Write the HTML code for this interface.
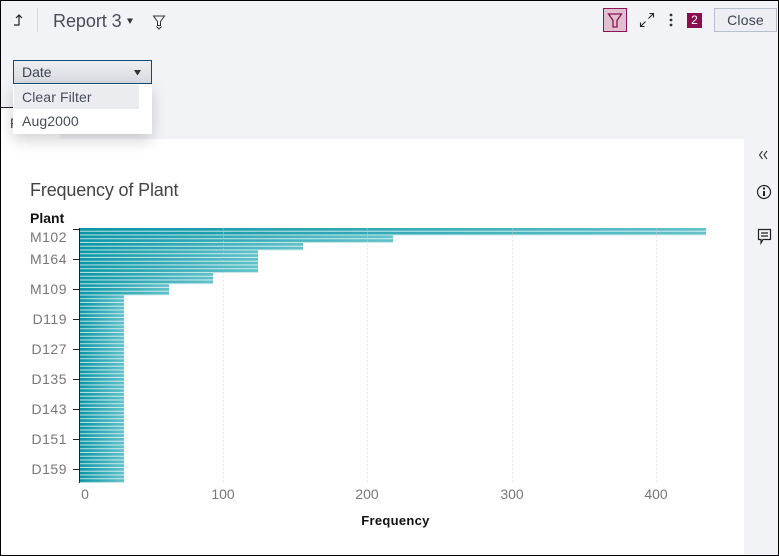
<!DOCTYPE html>
<html><head><meta charset="utf-8">
<style>
html,body{margin:0;padding:0}
body{width:779px;height:556px;overflow:hidden;position:relative;background:#f2f3f6;font-family:"Liberation Sans",sans-serif;color:#3d4450}
.a{position:absolute;white-space:nowrap}
</style></head><body>
<div class="a" style="left:0;top:107px;width:14px;height:1px;background:#222"></div>
<div class="a" style="left:0;top:108px;width:60px;height:31px;background:#fff"></div>
<div class="a" style="left:0;top:139px;width:744px;height:417px;background:#fff"></div>
<div class="a" style="left:10px;top:115px;font-size:14px;color:#444">P</div>

<div class="a" style="left:37px;top:8px;width:1px;height:24px;background:#d4d6db"></div>
<div class="a" style="left:53px;top:11px;font-size:18px;letter-spacing:-.05px;color:#474d59">Report 3</div>
<svg class="a" style="left:0;top:0" width="779" height="60">
<path d="M14 25H19V15M16 18L19 15L22 18" fill="none" stroke="#222" stroke-width="1.2"/>
<path d="M127 18.500H133L130 24Z" fill="#333"/>
<path d="M153.500 16H164.500L160.500 21.500V25.500H157.500V21.500Z M156.500 26.500L159 29L161.500 26.500" fill="none" stroke="#333" stroke-width="1"/>
<rect x="603.500" y="8.500" width="23" height="23" fill="#e0bfd0" stroke="#8a1550"/>
<path d="M608.500 14H621.500L617 20.500V27H613V20.500Z" fill="none" stroke="#8a1550" stroke-width="1.300"/>
<path d="M640.500 26.500L645.500 21.500M640.500 22.500V26.500H644.500M648.500 18.500L653.500 13.500M649.500 13.500H653.500V17.500" fill="none" stroke="#222" stroke-width="1.100"/>
<circle cx="671" cy="15" r="1.400" fill="#333"/><circle cx="671" cy="20" r="1.400" fill="#333"/><circle cx="671" cy="25" r="1.400" fill="#333"/>
<rect x="687" y="13" width="15" height="15" fill="#8a0f4e"/>
</svg>
<div class="a" style="left:687px;top:13px;width:15px;text-align:center;font-size:12px;line-height:15px;color:#fff">2</div>
<div class="a" style="left:714px;top:8px;width:61px;height:22px;border:1px solid #b4c0cf;background:#eceef2;font-size:14px;line-height:22px;text-align:center;color:#3d4450;letter-spacing:.2px">Close</div>

<div class="a" style="left:13px;top:60px;width:137px;height:22px;border:1px solid #0f4c7c;background:linear-gradient(#eceef1,#d8dbe0);font-size:14px;line-height:22px;text-indent:8px;color:#3d4450">Date</div>
<svg class="a" style="left:133px;top:69px" width="10" height="8"><path d="M1 1H8L4.500 6.500Z" fill="#333"/></svg>
<div class="a" style="left:13px;top:84px;width:139px;height:50px;background:#fff;box-shadow:0 6px 14px rgba(0,0,0,.18)"></div>
<div class="a" style="left:14px;top:85px;width:125px;height:24px;background:#eaecf0"></div>
<div class="a" style="left:22px;top:89px;font-size:14px;letter-spacing:.1px;color:#474d59">Clear Filter</div>
<div class="a" style="left:22px;top:113px;font-size:14px;letter-spacing:.1px;color:#474d59">Aug2000</div>

<svg class="a" style="left:750px;top:145px" width="29" height="100">
<path d="M12.500 6L9.500 10L12.500 14M17 6L14 10L17 14" fill="none" stroke="#333" stroke-width="1.100"/>
<circle cx="14" cy="47" r="6.500" fill="none" stroke="#222" stroke-width="1.200"/>
<path d="M14 46V51M14 42.500V44.500" stroke="#222" stroke-width="2"/>
<path d="M8.500 84.500H20.500V94.500H13L11 98V94.500H8.500Z M11 88H18M11 91H18" fill="none" stroke="#222" stroke-width="1.200"/>
</svg>

<div class="a" style="left:30px;top:180px;font-size:18px;letter-spacing:-.15px;color:#444">Frequency of Plant</div>
<div class="a" style="left:30px;top:210px;font-size:14px;font-weight:bold;color:#111">Plant</div>

<svg class="a" style="left:0;top:0" width="779" height="556" font-family="Liberation Sans, sans-serif" font-size="14" fill="#777">
<defs><linearGradient id="g"><stop offset="0" stop-color="#0a96a5"/><stop offset="1" stop-color="#62c1c9"/></linearGradient>
<pattern id="p" x="80" y="228" width="10" height="3.750" patternUnits="userSpaceOnUse"><rect y="2.700" width="10" height="1.050" fill="#fff" fill-opacity=".7"/></pattern></defs>
<rect x="80" y="228" width="626" height="7.500" fill="url(#g)"/>
<rect x="80" y="235.500" width="313" height="7.500" fill="url(#g)"/>
<rect x="80" y="243" width="223" height="7.500" fill="url(#g)"/>
<rect x="80" y="250.500" width="178" height="22.500" fill="url(#g)"/>
<rect x="80" y="273" width="133" height="11.250" fill="url(#g)"/>
<rect x="80" y="284.250" width="89" height="11.250" fill="url(#g)"/>
<rect x="80" y="295.500" width="44" height="187.500" fill="url(#g)"/>
<rect x="80" y="228" width="626" height="255" fill="url(#p)"/>
<rect x="124" y="296" width="582" height="187" fill="#fff"/>
<rect x="169" y="284.250" width="537" height="12" fill="#fff"/>
<rect x="213" y="273" width="493" height="11.250" fill="#fff"/>
<rect x="258" y="250.500" width="448" height="22.500" fill="#fff"/>
<rect x="303" y="243" width="403" height="7.500" fill="#fff"/>
<rect x="393" y="235.500" width="313" height="7.500" fill="#fff"/>
<g stroke="#ccc" stroke-opacity=".45" stroke-dasharray="2 2"><path d="M223.500 228V483M367.500 228V483M512.500 228V483M656.500 228V483"/></g>
<path d="M79.500 228V483" stroke="#222" stroke-width="1"/>
<path d="M73 229.500H79M73 259.500H79M73 289.500H79M73 319.500H79M73 349.500H79M73 379.500H79M73 409.500H79M73 439.500H79M73 469.500H79" stroke="#222" stroke-width="1"/>
<g text-anchor="end" letter-spacing=".5">
<text x="67" y="242">M102</text><text x="67" y="264">M164</text><text x="67" y="294">M109</text><text x="67" y="324">D119</text><text x="67" y="354">D127</text><text x="67" y="384">D135</text><text x="67" y="414">D143</text><text x="67" y="444">D151</text><text x="67" y="474">D159</text>
</g>
<g text-anchor="middle">
<text x="85" y="499">0</text><text x="223" y="499">100</text><text x="367" y="499">200</text><text x="512" y="499">300</text><text x="656" y="499">400</text>
<text x="395.500" y="525" font-size="13" font-weight="bold" fill="#111" letter-spacing=".3">Frequency</text>
</g>
</svg>
<div class="a" style="left:0;top:0;width:777px;height:554px;border:1px solid #000"></div>
</body></html>
